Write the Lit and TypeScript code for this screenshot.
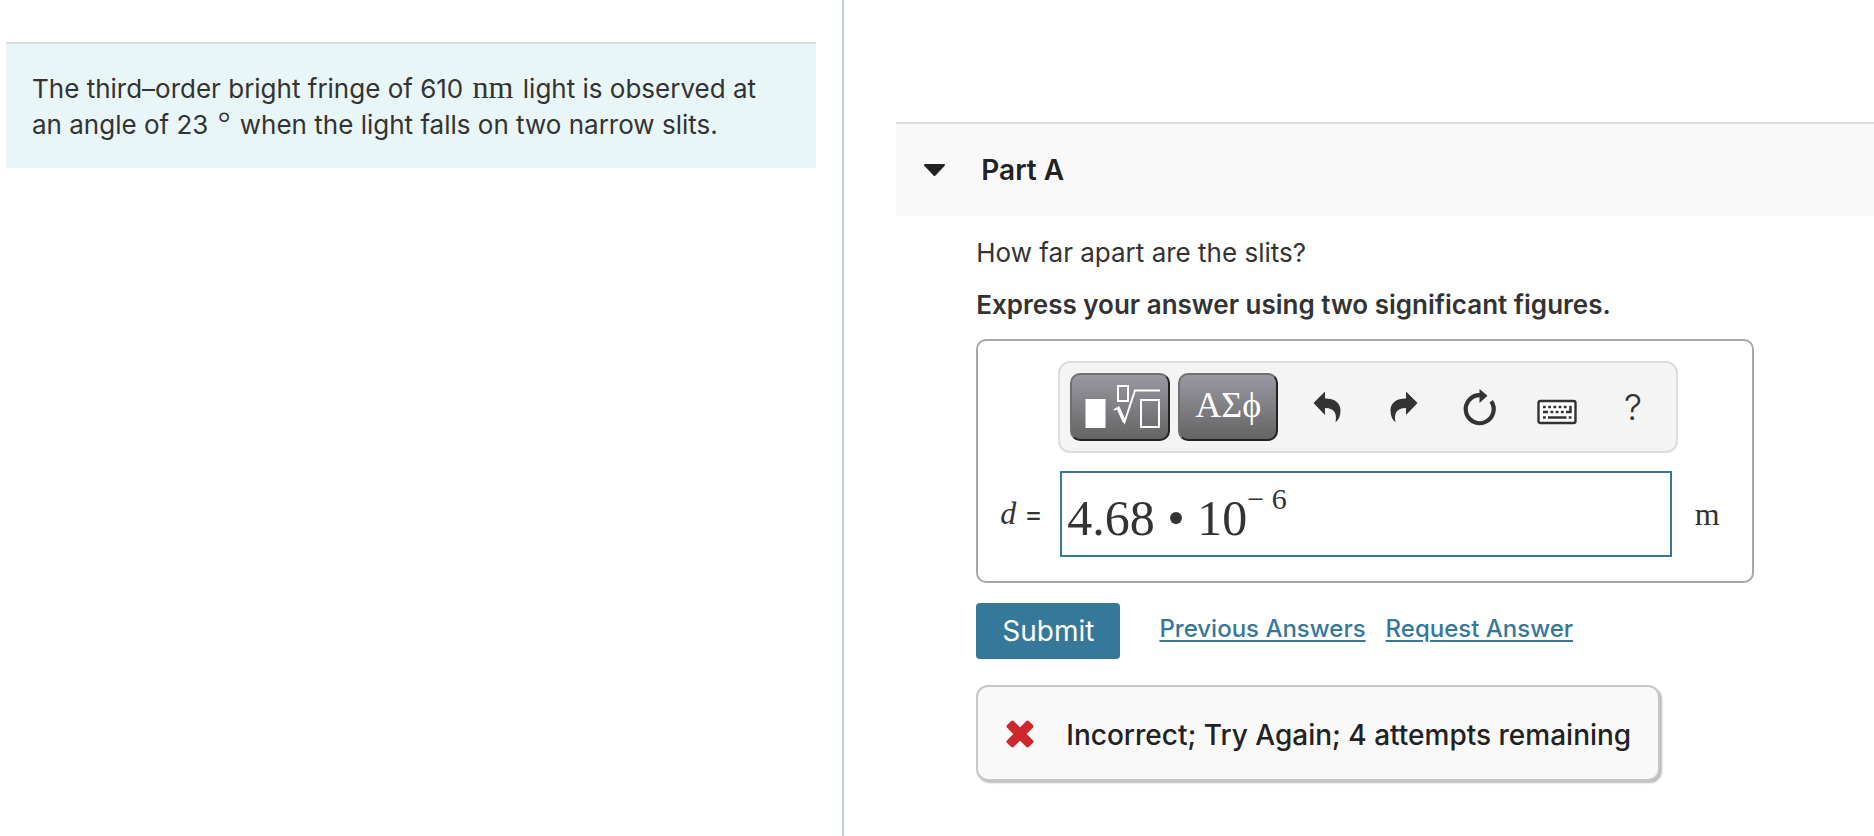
import { LitElement, html, css } from "lit";
import { customElement, property } from "lit/decorators.js";

@customElement("problem-statement")
class ProblemStatement extends LitElement {
  static styles = css`
    :host {
      display: block;
      padding: 42px 26px 0 6px;
    }
    .card {
      margin: 0;
      padding: 27px 40px 25px 26px;
      border-top: 2px solid #dcdcdc;
      background: #e9f6f7;
      font-size: 26px;
      line-height: 36px;
    }
    .unit,
    .degree {
      font-family: "Liberation Serif", serif;
      font-size: 32px;
      line-height: 0;
      margin: 0 2px;
    }
  `;
  render() {
    return html`<p class="card">
      The third–order bright fringe of 610 <span class="unit">nm</span> light is
      observed at an angle of 23 <span class="degree">°</span> when the light
      falls on two narrow slits.
    </p>`;
  }
}

@customElement("math-toolbar")
class MathToolbar extends LitElement {
  static styles = css`
    :host {
      display: flex;
      align-items: center;
      box-sizing: border-box;
      padding: 10px 5px 10px 10px;
      border: 2px solid #dcdcdc;
      border-radius: 12px;
      background: #f4f4f4;
    }
    button {
      font: inherit;
      color: inherit;
      padding: 0;
      cursor: pointer;
    }
    .key {
      display: grid;
      place-items: center;
      box-sizing: border-box;
      width: 100px;
      height: 68px;
      margin-right: 8px;
      border: 2px solid;
      border-color: #707070 #222 #222 #707070;
      border-radius: 10px;
      background: linear-gradient(#9a98a2, #646464);
      color: #fff;
    }
    .greek {
      margin-right: 11px;
      padding-bottom: 4px;
      font-family: "Liberation Serif", serif;
      font-size: 36px;
      line-height: 40px;
    }
    .tools {
      flex: 1;
      display: grid;
      grid-template-columns: repeat(5, 1fr);
    }
    .tool {
      display: grid;
      place-items: center;
      box-sizing: border-box;
      height: 68px;
      padding-top: 4px;
      border: 0;
      background: none;
      color: #333;
    }
    .help {
      padding-top: 0;
      font-size: 36px;
      font-weight: 300;
      line-height: 40px;
    }
    svg {
      display: block;
    }
  `;
  render() {
    return html`
      <button class="key" aria-label="Templates">
        <svg width="96" height="64" viewBox="0 0 96 64" fill="none" stroke="#fff" stroke-width="2">
          <rect x="13.500" y="24" width="20" height="29" fill="#fff" stroke="none" />
          <rect x="46" y="11" width="10" height="15" />
          <path d="M42 35l4.500-2.500L52.500 47L63 15.500H88" />
          <path d="M46 32.500L52.500 47" stroke-width="3.500" />
          <rect x="69" y="25" width="18" height="27" />
        </svg>
      </button>
      <button class="key greek" aria-label="Greek letters">ΑΣϕ</button>
      <div class="tools">
        <button class="tool" aria-label="Undo">
          <svg width="40" height="40" viewBox="0 0 40 40" fill="#333">
            <path d="M6.500 14L18 2.500V9.500C28 9.500 33.500 14 33.500 21.500C33.500 27 31.500 31 28.500 33.500C30 25.500 28.500 19 18 19V26Z" />
          </svg>
        </button>
        <button class="tool" aria-label="Redo">
          <svg width="40" height="40" viewBox="0 0 40 40" fill="#333">
            <path d="M33.500 14L22 2.500V9.500C12 9.500 6.500 14 6.500 21.500C6.500 27 8.500 31 11.500 33.500C10 25.500 11.500 19 22 19V26Z" />
          </svg>
        </button>
        <button class="tool" aria-label="Reset">
          <svg width="40" height="40" viewBox="0 0 40 40">
            <path d="M20.500 6.200A14 14 0 1 0 31.200 12.200" fill="none" stroke="#333" stroke-width="4.200" />
            <path d="M19.500 0L27.500 6.800L19.500 14Z" fill="#333" />
          </svg>
        </button>
        <button class="tool" aria-label="Keyboard">
          <svg width="40" height="40" viewBox="0 0 40 40">
            <rect x="1.500" y="12" width="37" height="22" rx="2" fill="#fff" stroke="#333" stroke-width="2.400" />
            <g stroke="#333" stroke-width="2.400" fill="none">
              <path d="M6 18h26" stroke-dasharray="2.800 2.400" />
              <path d="M6 23h5M13.500 23h2.800M18.700 23h2.800M23.900 23h2.800M29 23h5.500M33.500 16.800V24" />
              <path d="M6 28.500h2.800M11 28.500h18.500M31.700 28.500h2.800" />
            </g>
          </svg>
        </button>
        <button class="tool help" aria-label="Help">?</button>
      </div>
    `;
  }
}

@customElement("answer-box")
class AnswerBox extends LitElement {
  static styles = css`
    :host {
      display: grid;
      grid-template-columns: 62px minmax(0, 1fr) 62px;
      row-gap: 18px;
      align-items: center;
      box-sizing: border-box;
      max-width: 778px;
      padding: 20px 18px 24px 20px;
      border: 2px solid #a8a8a8;
      border-radius: 10px;
      color: #333;
    }
    math-toolbar {
      grid-column: 2;
      margin-right: -6px;
      margin-left: -2px;
    }
    .label {
      grid-column: 1;
      padding-left: 2px;
      font-size: 28px;
      line-height: 36px;
    }
    .variable {
      font-family: "Liberation Serif", serif;
      font-style: italic;
      font-size: 32px;
      line-height: 0;
    }
    .field {
      display: flex;
      align-items: flex-start;
      box-sizing: border-box;
      height: 86px;
      border: 2px solid #36789a;
      background: #fff;
    }
    .field input {
      box-sizing: border-box;
      margin: 0;
      border: 0;
      outline: 0;
      background: none;
      font-family: "Liberation Serif", serif;
      color: #333;
    }
    .base {
      width: 185px;
      height: 82px;
      padding: 8px 0 0 5px;
      font-size: 50px;
    }
    .exponent {
      flex: 1;
      min-width: 0;
      height: 44px;
      padding: 8px 0 0;
      font-size: 30px;
    }
    .unit {
      font-family: "Liberation Serif", serif;
      font-size: 32px;
      line-height: 36px;
      text-align: center;
      margin-left: 8px;
    }
  `;
  render() {
    return html`
      <math-toolbar role="toolbar" aria-label="Equation editor"></math-toolbar>
      <label class="label" for="base"><span class="variable">d</span> =</label>
      <div class="field">
        <input id="base" class="base" type="text" value="4.68 • 10" />
        <input class="exponent" type="text" value="− 6" aria-label="Exponent" />
      </div>
      <span class="unit">m</span>
    `;
  }
}

@customElement("feedback-note")
class FeedbackNote extends LitElement {
  @property() message = "";
  static styles = css`
    :host {
      display: flex;
      align-items: center;
      gap: 32px;
      box-sizing: border-box;
      width: fit-content;
      max-width: 100%;
      padding: 28px 27px 26px 28px;
      border: 2px solid #c7c7c7;
      border-radius: 12px;
      background: #f9f9f9;
      box-shadow: 2px 2px 2px #bbb;
      font-size: 28px;
      font-weight: 500;
      line-height: 36px;
      color: #222;
    }
    span {
      padding-top: 2px;
    }
    svg {
      flex: none;
    }
  `;
  render() {
    return html`
      <svg width="28" height="28" viewBox="-14 -14 28 28" fill="#cc282e" aria-hidden="true">
        <rect x="-15.500" y="-4.700" width="31" height="9.400" rx="2" transform="rotate(45)" />
        <rect x="-15.500" y="-4.700" width="31" height="9.400" rx="2" transform="rotate(-45)" />
      </svg>
      <span>${this.message}</span>
    `;
  }
}

@customElement("app-root")
class AppRoot extends LitElement {
  static styles = css`
    :host {
      display: grid;
      grid-template-columns: calc(45% + 1px) minmax(0, 1fr);
      min-height: 100vh;
      background: #fff;
      color: #333;
      font-family: Inter, "Liberation Sans", sans-serif;
    }
    .problem {
      border-right: 2px solid #bccbdf;
    }
    .part {
      min-width: 0;
      padding: 122px 0 0 52px;
    }
    .header {
      display: flex;
      align-items: center;
      gap: 36px;
      box-sizing: border-box;
      height: 94px;
      padding-left: 28px;
      border-top: 2px solid #dcdcdc;
      background: #f9f9f9;
      color: #222;
    }
    h2 {
      margin: 0;
      font-size: 28px;
      font-weight: 600;
      line-height: 36px;
    }
    .body {
      padding: 19px 24px 24px 80px;
      font-size: 26px;
      line-height: 36px;
    }
    p {
      margin: 0 0 16px;
    }
    .instruction {
      font-weight: 600;
    }
    .actions {
      display: flex;
      align-items: center;
      margin: 20px 0 26px;
      font-size: 24px;
      font-weight: 500;
    }
    .submit {
      height: 56px;
      padding: 0 26px;
      margin-right: 39px;
      border: 0;
      border-radius: 4px;
      background: #36789a;
      color: #fff;
      font: 400 28px/36px Inter, "Liberation Sans", sans-serif;
      cursor: pointer;
    }
    a {
      color: #36789a;
      margin-right: 20px;
      padding-bottom: 4px;
      text-decoration-thickness: 2px;
      text-underline-offset: 3px;
    }
  `;
  render() {
    return html`
      <section class="problem"><problem-statement></problem-statement></section>
      <main class="part">
        <header class="header">
          <svg width="21" height="12" viewBox="0 0 21 12" aria-hidden="true">
            <path d="M1 1H20L10.500 11Z" fill="#222" stroke="#222" stroke-width="2" stroke-linejoin="round" />
          </svg>
          <h2>Part A</h2>
        </header>
        <div class="body">
          <p>How far apart are the slits?</p>
          <p class="instruction">Express your answer using two significant figures.</p>
          <answer-box></answer-box>
          <div class="actions">
            <button class="submit">Submit</button>
            <a href="#previous">Previous Answers</a>
            <a href="#request">Request Answer</a>
          </div>
          <feedback-note role="status" message="Incorrect; Try Again; 4 attempts remaining"></feedback-note>
        </div>
      </main>
    `;
  }
}
